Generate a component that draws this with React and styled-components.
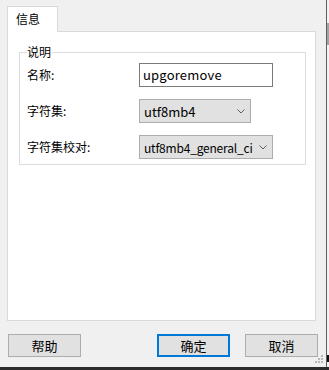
import React from "react";
import styled, { createGlobalStyle } from "styled-components";

const GlobalStyle = createGlobalStyle`
  html, body {
    margin: 0;
    padding: 0;
    background: #f0f0f0;
  }
  body {
    font-family: "Noto Sans CJK SC", "Microsoft YaHei", sans-serif;
    font-size: 12px;
    color: #000;
  }
`;

const Screen = styled.div`
  width: 329px;
  height: 370px;
  display: flex;
  flex-direction: column;
  overflow: hidden;
`;

const Window = styled.div`
  flex: 1;
  display: flex;
`;

const Dialog = styled.div`
  position: relative;
  width: 326px;
  display: flex;
  flex-direction: column;
  padding: 6px 0 0 7px;
  box-sizing: border-box;
`;

const EdgeLine = styled.div`
  width: 1px;
  background: #5e5e5e;
`;

const Edge = styled.div`
  flex: 1;
  display: flex;
  flex-direction: column;
  padding-top: 23px;
  background: #f3f3f3;
`;

const EdgeBlock = styled.div`
  height: ${(p) => p.h}px;
  margin-top: ${(p) => p.top}px;
  background: ${(p) => p.color};
`;

const BottomStrip = styled.div`
  height: 3px;
  background: #2b2b2b;
`;

const TabBar = styled.div`
  display: flex;
`;

const Tab = styled.div`
  position: relative;
  z-index: 1;
  width: 51px;
  height: 26px;
  box-sizing: border-box;
  padding: 4px 0 0 8px;
  background: #fff;
  border: 1px solid #d9d9d9;
  border-bottom: none;
  margin-bottom: -1px;
  line-height: 16px;
`;

const Panel = styled.div`
  width: 309px;
  height: 290px;
  box-sizing: border-box;
  background: #fff;
  border: 1px solid #d9d9d9;
  padding: 12px 0 0 11px;
`;

const Group = styled.fieldset`
  width: 287px;
  height: 121px;
  box-sizing: border-box;
  margin: 0;
  padding: 3px 0 0 7px;
  min-width: 0;
  border: 1px solid #dcdcdc;
`;

const Legend = styled.legend`
  padding: 0 1px 0 0;
  margin-left: 0;
  line-height: 16px;
`;

const Form = styled.div`
  display: grid;
  grid-template-columns: 112px auto;
  grid-auto-rows: ${(p) => p.row}px;
  row-gap: 12px;
  align-items: center;
`;

const Label = styled.div`
  line-height: 16px;
`;

const Input = styled.div`
  width: 134px;
  height: 24px;
  box-sizing: border-box;
  border: 1px solid #7a7a7a;
  padding: 0 3px;
  line-height: 22px;
  font-size: 13px;
  letter-spacing: 0.2px;
`;

const Select = styled.div`
  width: ${(p) => p.w}px;
  height: 24px;
  box-sizing: border-box;
  display: flex;
  align-items: center;
  gap: 4px;
  background: #e1e1e1;
  border: 1px solid #adadad;
  padding: 0 5px 0 4px;
  font-size: ${(p) => (p.tight ? 12 : 13)}px;
  letter-spacing: ${(p) => (p.tight ? -0.2 : 0)}px;
  white-space: nowrap;
`;

const SelectText = styled.span`
  flex: 1;
  min-width: 0;
  overflow: hidden;
`;

const Chevron = () => (
  <svg width="8" height="5" viewBox="0 0 8 5">
    <path d="M0.5 0.5 L4 4 L7.5 0.5" fill="none" stroke="#606060" strokeWidth="1" />
  </svg>
);

const ButtonRow = styled.div`
  display: flex;
  margin-top: 13px;
  padding-left: 1px;
`;

const Button = styled.div`
  width: 73px;
  height: 23px;
  box-sizing: border-box;
  display: flex;
  align-items: center;
  justify-content: center;
  background: #e1e1e1;
  border: ${(p) => (p.primary ? "2px solid #0078d7" : "1px solid #adadad")};
  margin-left: ${(p) => p.gap || 0}px;
  font-size: 13px;
`;

const Grip = styled.svg`
  position: absolute;
  right: 3px;
  bottom: 4px;
`;

const GripDots = () => (
  <Grip width="8" height="8" viewBox="0 0 8 8">
    {[
      [6, 0],
      [3, 3],
      [6, 3],
      [0, 6],
      [3, 6],
      [6, 6],
    ].map(([x, y]) => (
      <rect key={`${x}-${y}`} x={x} y={y} width="2" height="2" fill="#b8b8b8" />
    ))}
  </Grip>
);

export default function App() {
  return (
    <Screen>
      <GlobalStyle />
      <Window>
        <Dialog>
          <TabBar>
            <Tab>信息</Tab>
          </TabBar>
          <Panel>
            <Group>
              <Legend>说明</Legend>
              <Form row={24}>
                <Label>名称:</Label>
                <Input>upgoremove</Input>
                <Label>字符集:</Label>
                <Select w={112}>
                  <SelectText>utf8mb4</SelectText>
                  <Chevron />
                </Select>
                <Label>字符集校对:</Label>
                <Select w={134} tight>
                  <SelectText>utf8mb4_general_ci</SelectText>
                  <Chevron />
                </Select>
              </Form>
            </Group>
          </Panel>
          <ButtonRow>
            <Button>帮助</Button>
            <Button primary gap={76}>确定</Button>
            <Button gap={15}>取消</Button>
          </ButtonRow>
          <GripDots />
        </Dialog>
        <EdgeLine />
        <Edge>
          <EdgeBlock h={22} top={0} color="#a3a3a3" />
          <EdgeBlock h={7} top={310} color="#111" />
        </Edge>
      </Window>
      <BottomStrip />
    </Screen>
  );
}
